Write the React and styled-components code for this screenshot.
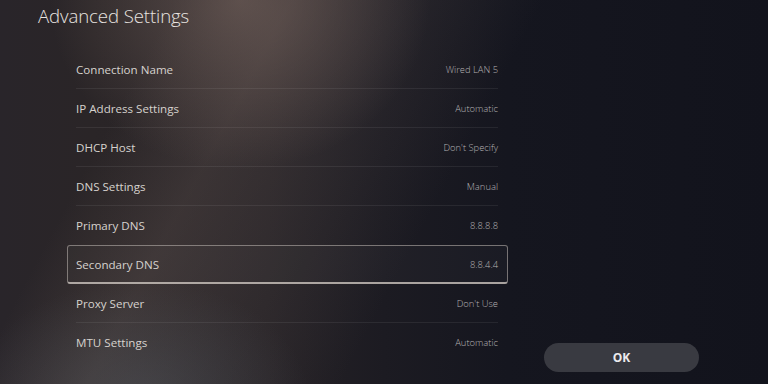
import React from "react";
import styled, { createGlobalStyle } from "styled-components";

const Global = createGlobalStyle`
  html, body { margin: 0; padding: 0; background: #13141c; }
  #root { width: 768px; height: 384px; overflow: hidden; }
`;

const Screen = styled.div`
  width: 768px;
  height: 384px;
  box-sizing: border-box;
  display: flex;
  flex-direction: column;
  font-family: "Open Sans", "Noto Sans", sans-serif;
  color: #dcd8d4;
  background:
    radial-gradient(ellipse 170px 120px at 140px 400px, rgba(95, 105, 115, 0.35), transparent 100%),
    radial-gradient(ellipse 190px 170px at 240px 0px, rgba(130, 110, 102, 0.55), transparent 100%),
    linear-gradient(118deg, transparent 0%, transparent 18%, rgba(110, 95, 90, 0.28) 30%, rgba(90, 80, 78, 0.2) 42%, transparent 56%),
    linear-gradient(90deg, #29252a 0%, #2a2527 12%, #262226 35%, #1c1b22 50%, #15161f 66%, #12131c 100%);
`;

const Title = styled.h1`
  margin: 0;
  padding: 4px 0 0 38px;
  height: 46px;
  box-sizing: border-box;
  font-size: 18.6px;
  font-weight: 300;
  line-height: 24px;
  color: #e8e4e0;
  letter-spacing: -0.1px;
`;

const Content = styled.div`
  flex: 1;
  display: flex;
  padding-top: 4px;
`;

const List = styled.div`
  margin-left: 67px;
  width: 441px;
  display: flex;
  flex-direction: column;
`;

const Row = styled.div`
  position: relative;
  height: 39px;
  box-sizing: border-box;
  display: flex;
  align-items: center;
  justify-content: space-between;
  padding: 0 9px 0 8px;
  border-radius: 3px;
  border: 1px solid ${(p) => (p.$selected ? "rgba(180, 174, 170, 0.6)" : "transparent")};
  border-bottom: ${(p) => (p.$selected ? "2px solid rgba(205, 198, 192, 0.8)" : "1px solid transparent")};
  background: ${(p) => (p.$selected ? "rgba(255,255,255,0.025)" : "transparent")};
  &::after {
    content: "";
    display: ${(p) => (p.$line ? "block" : "none")};
    position: absolute;
    left: 8px;
    right: 9px;
    bottom: -1px;
    height: 1px;
    background: rgba(255, 255, 255, 0.07);
  }
`;

const Label = styled.span`
  font-size: 11.6px;
  color: #d6d2ce;
`;

const Value = styled.span`
  font-size: 9.4px;
  font-weight: 300;
  color: #b4b2b4;
`;

const Side = styled.div`
  margin-left: 36px;
  display: flex;
  flex-direction: column;
  justify-content: flex-end;
  padding-bottom: 12px;
`;

const OkButton = styled.button`
  width: 155px;
  height: 29px;
  border: none;
  border-radius: 15px;
  background: #393a41;
  color: #ecebee;
  font-family: "Open Sans", "Noto Sans", sans-serif;
  font-size: 12px;
  font-weight: 700;
  cursor: pointer;
`;

const rows = [
  ["Connection Name", "Wired LAN 5"],
  ["IP Address Settings", "Automatic"],
  ["DHCP Host", "Don't Specify"],
  ["DNS Settings", "Manual"],
  ["Primary DNS", "8.8.8.8"],
  ["Secondary DNS", "8.8.4.4"],
  ["Proxy Server", "Don't Use"],
  ["MTU Settings", "Automatic"],
];

const SELECTED = 5;

export default function App() {
  return (
    <>
      <Global />
      <Screen>
        <Title>Advanced Settings</Title>
        <Content>
          <List>
            {rows.map(([label, value], i) => (
              <Row
                key={label}
                $selected={i === SELECTED}
                $line={i !== SELECTED && i !== SELECTED - 1 && i !== rows.length - 1}
              >
                <Label>{label}</Label>
                <Value>{value}</Value>
              </Row>
            ))}
          </List>
          <Side>
            <OkButton>OK</OkButton>
          </Side>
        </Content>
      </Screen>
    </>
  );
}
